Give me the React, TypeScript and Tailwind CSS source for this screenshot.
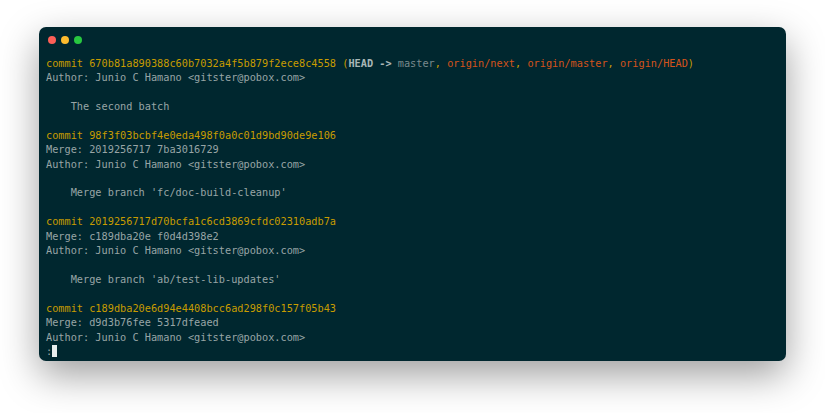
const mono = { fontFamily: '"DejaVu Sans Mono", "Liberation Mono", monospace' };

type Commit = {
  hash: string;
  merge?: string;
  message?: string;
};

const commits: Commit[] = [
  { hash: "98f3f03bcbf4e0eda498f0a0c01d9bd90de9e106", merge: "2019256717 7ba3016729", message: "Merge branch 'fc/doc-build-cleanup'" },
  { hash: "2019256717d70bcfa1c6cd3869cfdc02310adb7a", merge: "c189dba20e f0d4d398e2", message: "Merge branch 'ab/test-lib-updates'" },
  { hash: "c189dba20e6d94e4408bcc6ad298f0c157f05b43", merge: "d9d3b76fee 5317dfeaed" },
];

const author = "Author: Junio C Hamano <gitster@pobox.com>";

function Line({ children }: { children?: React.ReactNode }) {
  return <div className="h-[14.45px] whitespace-pre">{children ?? " "}</div>;
}

export default function App() {
  return (
    <div className="w-[825px] h-[413px] bg-white pt-[27px] pl-[39px]">
      <div className="w-[747px] h-[334px] rounded-[7px] bg-[#00272f] shadow-[0_14px_38px_rgba(0,0,0,0.38)] overflow-hidden">
        <div className="flex gap-[5px] pl-[9px] pt-[9px]">
          <span className="w-[8px] h-[8px] rounded-full bg-[#fc5f57]" />
          <span className="w-[8px] h-[8px] rounded-full bg-[#fdbc2e]" />
          <span className="w-[8px] h-[8px] rounded-full bg-[#28c840]" />
        </div>
        <div style={mono} className="text-[10.25px] leading-[14.45px] text-[#98a5a6] pl-[7px] pt-[11.5px]">
          <Line>
            <span className="text-[#c89c00]">commit 670b81a890388c60b7032a4f5b879f2ece8c4558 (</span>
            <span className="font-bold text-[#a9b7b7]">HEAD -&gt; </span>
            <span className="text-[#7a8a8d]">master</span>
            <span className="text-[#c89c00]">, </span>
            <span className="text-[#d4531b]">origin/next</span>
            <span className="text-[#c89c00]">, </span>
            <span className="text-[#d4531b]">origin/master</span>
            <span className="text-[#c89c00]">, </span>
            <span className="text-[#d4531b]">origin/HEAD</span>
            <span className="text-[#c89c00]">)</span>
          </Line>
          <Line>{author}</Line>
          <Line />
          <Line>{"    The second batch"}</Line>
          <Line />
          {commits.map((c, i) => (
            <div key={c.hash}>
              <Line>
                <span className="text-[#c89c00]">commit {c.hash}</span>
              </Line>
              <Line>Merge: {c.merge}</Line>
              <Line>{author}</Line>
              {c.message && (
                <>
                  <Line />
                  <Line>{"    " + c.message}</Line>
                  <Line />
                </>
              )}
              {i === commits.length - 1 && (
                <Line>
                  :<span className="inline-block w-[5px] h-[12px] bg-[#e8eeee] align-[-2px]" />
                </Line>
              )}
            </div>
          ))}
        </div>
      </div>
    </div>
  );
}
